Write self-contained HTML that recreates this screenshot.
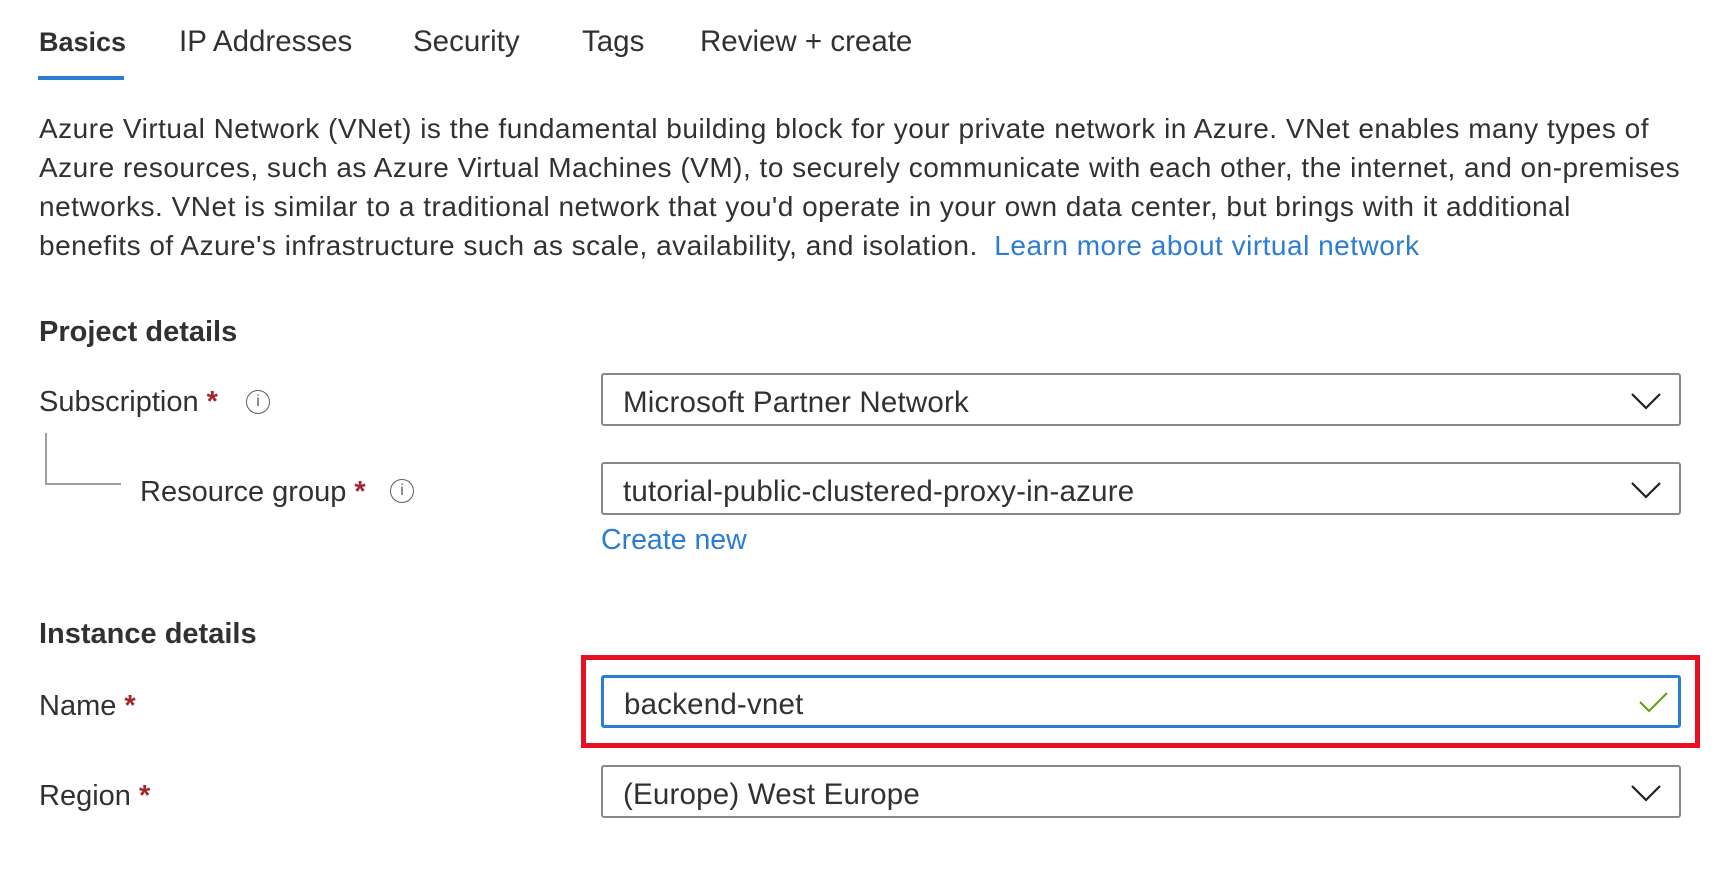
<!DOCTYPE html>
<html><head><meta charset="utf-8"><style>
body{margin:0;width:1720px;height:888px;background:#fff;font-family:"Liberation Sans",sans-serif;color:#323130;position:relative;overflow:hidden}
.a{position:absolute;white-space:nowrap;line-height:1}
.tab{font-size:29.5px;top:27px}
.p{font-size:28px;letter-spacing:0.5px;left:39px}
.h{font-size:29px;font-weight:bold;left:39px;color:#323130}
.l{font-size:29px}
.st{color:#a4262c;font-weight:bold}
.dd{position:absolute;left:601px;width:1080px;border:2px solid #8a8886;border-radius:3px;box-sizing:border-box;height:53px}
.dd span{position:absolute;left:20px;top:11px;font-size:29.5px;letter-spacing:0.2px;white-space:nowrap}
.dd svg{position:absolute;right:18px;top:17px}
.info{position:absolute;width:24px;height:24px;border:1.5px solid #605e5c;border-radius:50%;box-sizing:border-box;font-size:16px;text-align:center;line-height:21px;color:#605e5c}
</style></head><body>
<div class="a tab" style="left:39px;font-weight:bold;font-size:27px;top:29px;color:#323130">Basics</div>
<div style="position:absolute;left:38px;top:76px;width:86px;height:4px;background:#2b7cd3"></div>
<div class="a tab" style="left:179px">IP Addresses</div>
<div class="a tab" style="left:413px">Security</div>
<div class="a tab" style="left:582px">Tags</div>
<div class="a tab" style="left:700px">Review + create</div>

<div class="a p" style="top:115px">Azure Virtual Network (VNet) is the fundamental building block for your private network in Azure. VNet enables many types of</div>
<div class="a p" style="top:154px">Azure resources, such as Azure Virtual Machines (VM), to securely communicate with each other, the internet, and on-premises</div>
<div class="a p" style="top:193px">networks. VNet is similar to a traditional network that you'd operate in your own data center, but brings with it additional</div>
<div class="a p" style="top:232px">benefits of Azure's infrastructure such as scale, availability, and isolation. &nbsp;<span style="color:#2b7cd3">Learn more about virtual network</span></div>

<div class="a h" style="top:318px">Project details</div>
<div class="a l" style="left:39px;top:388px">Subscription <span class="st">*</span></div>
<div class="info" style="left:246px;top:390px">i</div>
<div style="position:absolute;left:45px;top:433px;width:74px;height:50px;border-left:2px solid #a19f9d;border-bottom:2px solid #a19f9d"></div>
<div class="a l" style="left:140px;top:478px">Resource group <span class="st">*</span></div>
<div class="info" style="left:390px;top:479px">i</div>

<div class="dd" style="top:373px"><span>Microsoft Partner Network</span><svg width="30" height="18" viewBox="0 0 30 18"><path d="M1 2 L15 16 L29 2" fill="none" stroke="#201f1e" stroke-width="2.2"/></svg></div>
<div class="dd" style="top:462px"><span>tutorial-public-clustered-proxy-in-azure</span><svg width="30" height="18" viewBox="0 0 30 18"><path d="M1 2 L15 16 L29 2" fill="none" stroke="#201f1e" stroke-width="2.2"/></svg></div>
<div class="a l" style="left:601px;top:526px;color:#2b7cd3;font-size:28.5px">Create new</div>

<div class="a h" style="top:620px">Instance details</div>
<div style="position:absolute;left:581px;top:655px;width:1119px;height:93px;border:5px solid #e81123;box-sizing:border-box"></div>
<div class="dd" style="top:675px;border:3px solid #2b7cd3"><span style="top:10px">backend-vnet</span><svg width="30" height="22" viewBox="0 0 30 22" style="top:13px;right:9px"><path d="M1 11 L10 20 L28 2" fill="none" stroke="#57a300" stroke-width="2"/></svg></div>
<div class="a l" style="left:39px;top:692px">Name <span class="st">*</span></div>

<div class="a l" style="left:39px;top:782px">Region <span class="st">*</span></div>
<div class="dd" style="top:765px"><span>(Europe) West Europe</span><svg width="30" height="18" viewBox="0 0 30 18"><path d="M1 2 L15 16 L29 2" fill="none" stroke="#201f1e" stroke-width="2.2"/></svg></div>
</body></html>
